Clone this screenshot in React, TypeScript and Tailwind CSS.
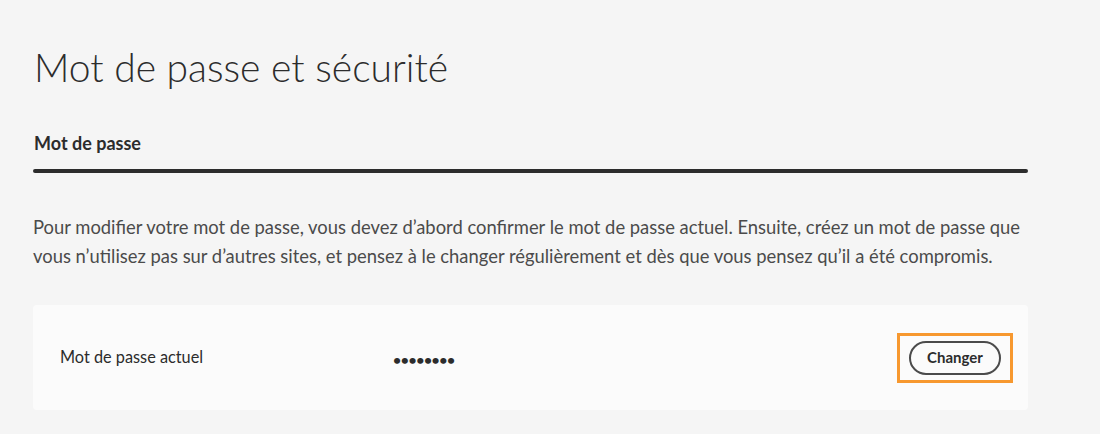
export default function App() {
  return (
    <div className="min-h-[434px] w-[1100px] bg-[#f5f5f5] text-[#4b4b4b]" style={{ fontFamily: 'Lato, "Open Sans", sans-serif' }}>
      <div className="w-[995px] ml-[33px] pt-[39px]">
        <h1 className="text-[39px] leading-[56px] font-light text-[#2c2c2c] pl-[1px]">Mot de passe et sécurité</h1>
        <div className="mt-[37px] text-[18px] leading-[22px] font-bold text-[#2c2c2c] pl-[1px]">Mot de passe</div>
        <div className="mt-[15px] h-[4px] rounded-full bg-[#2c2c2c]" />
        <p className="mt-[40px] text-[18.4px] leading-[29px] text-[#4b4b4b] whitespace-nowrap">
          Pour modifier votre mot de passe, vous devez d’abord confirmer le mot de passe actuel. Ensuite, créez un mot de passe que
          <br />
          vous n’utilisez pas sur d’autres sites, et pensez à le changer régulièrement et dès que vous pensez qu’il a été compromis.
        </p>
        <div className="mt-[34px] h-[105px] rounded-[4px] bg-[#fbfbfb] flex items-center pl-[27px] pr-[15px]">
          <div className="w-[333px] text-[16.3px] text-[#2c2c2c]">Mot de passe actuel</div>
          <div className="flex-1 text-[14px] text-[#2c2c2c] font-bold tracking-[-0.4px] pt-[4px]">••••••••</div>
          <div className="border-[3px] border-[#f7982f] py-[5px] px-[9px]">
            <button className="h-[34px] w-[92px] rounded-full border-2 border-[#4b4b4b] text-[15px] font-bold text-[#2c2c2c] flex items-center justify-center">Changer</button>
          </div>
        </div>
      </div>
    </div>
  );
}
